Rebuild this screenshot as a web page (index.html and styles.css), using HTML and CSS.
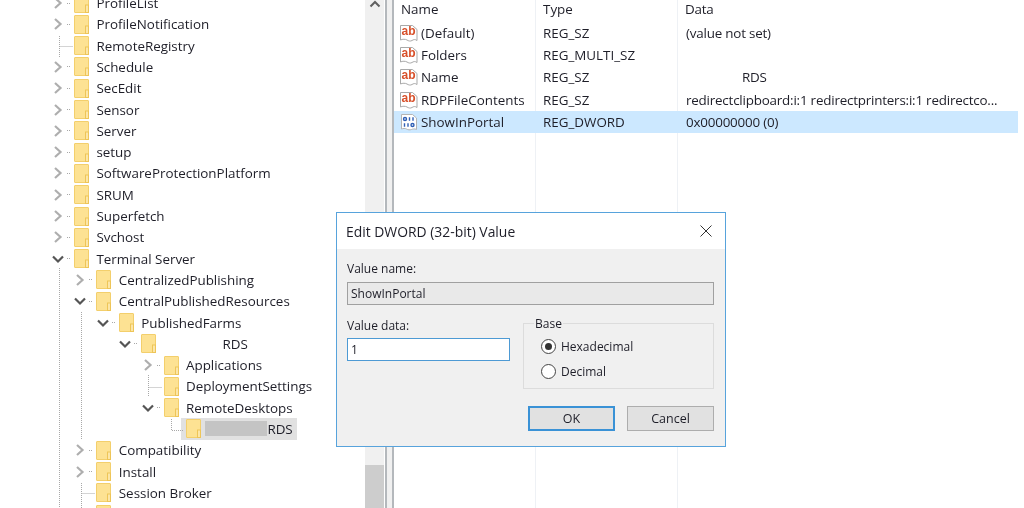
FILE: index.html
```html
<!DOCTYPE html>
<html lang="en">
<head>
<meta charset="utf-8">
<title>Registry Editor</title>
<link rel="stylesheet" href="styles.css">
</head>
<body>
<svg class="defs" width="0" height="0" aria-hidden="true">
  <symbol id="folder" viewBox="0 0 15 19">
    <rect x=".5" y=".5" width="14" height="18" rx=".5" fill="#fde293" stroke="#f3cf6c"/>
    <rect x="11.500" y="11" width="3" height="7.500" fill="#fce6a8" stroke="#eec558" stroke-width="1"/>
  </symbol>
  <symbol id="chev-r" viewBox="0 0 14 14">
    <path d="M4 2l5.500 5L4 12" fill="none" stroke="#aeaeae" stroke-width="2.200"/>
  </symbol>
  <symbol id="chev-d" viewBox="0 0 14 14">
    <path d="M2 4.500l5 5 5-5" fill="none" stroke="#555" stroke-width="2.200"/>
  </symbol>
  <symbol id="page" viewBox="0 0 18 18">
    <path d="M.5 1.500h12l4.500 4v11c-2-1.500-3.500-1-5 0s-3.500 .5-5-.5-4.500-1-6.500 0z" fill="#fff" stroke="#a9a9a9"/>
  </symbol>
  <symbol id="bits" viewBox="0 0 18 18">
    <path d="M1.500 1.500h11l4 3.500v11.500c-2-1-3.500-.5-5 0s-3.500 .5-5-.5-3.500-.5-5 0z" fill="#fff" stroke="#b4b4b4"/>
    <g fill="none" stroke="#2f5fb5" stroke-width="1.400">
      <circle cx="5" cy="6" r="1.500"/><path d="M9.500 4.200v3.600M13 4.200v3.600"/>
      <path d="M4.500 10.200v3.600M8 10.200v3.600"/><circle cx="12.500" cy="12" r="1.500"/>
    </g>
  </symbol>
</svg>

<div class="app">
  <div class="tree-pane">
    <div class="tree">
      <div class="row d0"><svg class="chev"><use href="#chev-r"/></svg><i class="stub"></i><svg class="folder"><use href="#folder"/></svg><span>ProfileList</span></div>
      <div class="row d0"><svg class="chev"><use href="#chev-r"/></svg><i class="stub"></i><svg class="folder"><use href="#folder"/></svg><span>ProfileNotification</span></div>
      <div class="row d0"><i class="chev"></i><i class="stub"></i><svg class="folder"><use href="#folder"/></svg><span>RemoteRegistry</span></div>
      <div class="row d0"><svg class="chev"><use href="#chev-r"/></svg><i class="stub"></i><svg class="folder"><use href="#folder"/></svg><span>Schedule</span></div>
      <div class="row d0"><svg class="chev"><use href="#chev-r"/></svg><i class="stub"></i><svg class="folder"><use href="#folder"/></svg><span>SecEdit</span></div>
      <div class="row d0"><svg class="chev"><use href="#chev-r"/></svg><i class="stub"></i><svg class="folder"><use href="#folder"/></svg><span>Sensor</span></div>
      <div class="row d0"><svg class="chev"><use href="#chev-r"/></svg><i class="stub"></i><svg class="folder"><use href="#folder"/></svg><span>Server</span></div>
      <div class="row d0"><svg class="chev"><use href="#chev-r"/></svg><i class="stub"></i><svg class="folder"><use href="#folder"/></svg><span>setup</span></div>
      <div class="row d0"><svg class="chev"><use href="#chev-r"/></svg><i class="stub"></i><svg class="folder"><use href="#folder"/></svg><span>SoftwareProtectionPlatform</span></div>
      <div class="row d0"><svg class="chev"><use href="#chev-r"/></svg><i class="stub"></i><svg class="folder"><use href="#folder"/></svg><span>SRUM</span></div>
      <div class="row d0"><svg class="chev"><use href="#chev-r"/></svg><i class="stub"></i><svg class="folder"><use href="#folder"/></svg><span>Superfetch</span></div>
      <div class="row d0"><svg class="chev"><use href="#chev-r"/></svg><i class="stub"></i><svg class="folder"><use href="#folder"/></svg><span>Svchost</span></div>
      <div class="row d0"><svg class="chev"><use href="#chev-d"/></svg><i class="stub"></i><svg class="folder"><use href="#folder"/></svg><span>Terminal Server</span></div>
      <div class="row d1"><svg class="chev"><use href="#chev-r"/></svg><i class="stub"></i><svg class="folder"><use href="#folder"/></svg><span>CentralizedPublishing</span></div>
      <div class="row d1"><svg class="chev"><use href="#chev-d"/></svg><i class="stub"></i><svg class="folder"><use href="#folder"/></svg><span>CentralPublishedResources</span></div>
      <div class="row d2"><svg class="chev"><use href="#chev-d"/></svg><i class="stub"></i><svg class="folder"><use href="#folder"/></svg><span>PublishedFarms</span></div>
      <div class="row d3"><svg class="chev"><use href="#chev-d"/></svg><i class="stub"></i><svg class="folder"><use href="#folder"/></svg><span class="gap-rds">RDS</span></div>
      <div class="row d4"><svg class="chev"><use href="#chev-r"/></svg><i class="stub"></i><svg class="folder"><use href="#folder"/></svg><span>Applications</span></div>
      <div class="row d4"><i class="chev"></i><i class="stub"></i><svg class="folder"><use href="#folder"/></svg><span>DeploymentSettings</span></div>
      <div class="row d4"><svg class="chev"><use href="#chev-d"/></svg><i class="stub"></i><svg class="folder"><use href="#folder"/></svg><span>RemoteDesktops</span></div>
      <div class="row d5 selected"><i class="chev"></i><i class="stub"></i><svg class="folder"><use href="#folder"/></svg><div class="sel-box"><b class="redact"></b><span>RDS</span></div></div>
      <div class="row d1"><svg class="chev"><use href="#chev-r"/></svg><i class="stub"></i><svg class="folder"><use href="#folder"/></svg><span>Compatibility</span></div>
      <div class="row d1"><svg class="chev"><use href="#chev-r"/></svg><i class="stub"></i><svg class="folder"><use href="#folder"/></svg><span>Install</span></div>
      <div class="row d1"><i class="chev"></i><i class="stub"></i><svg class="folder"><use href="#folder"/></svg><span>Session Broker</span></div>
      <div class="row d1"><i class="chev"></i><i class="stub"></i><svg class="folder"><use href="#folder"/></svg><span></span></div>
    </div>
    <svg class="tree-lines" width="365" height="508" aria-hidden="true">
      <g fill="none" stroke="#a8a8a8" stroke-dasharray="1 1">
        <path d="M59.500 36v21M59.500 46.500h13"/>
        <path d="M59.500 268v240"/>
        <path d="M81.500 312v128M81.500 483v25M81.500 493.500h13"/>
        <path d="M148.500 375v22M148.500 387.500h13"/>
        <path d="M171.500 419v11.500h12"/>
      </g>
    </svg>
  </div>

  <div class="scrollbar">
    <svg class="scroll-up" width="12" height="8"><path d="M1.500 6.500L6 2l4.500 4.500" fill="none" stroke="#606060" stroke-width="2"/></svg>
    <div class="scroll-thumb"></div>
  </div>
  <div class="splitter"></div>

  <div class="values">
    <div class="cols">
      <div class="col-name">Name</div><div class="col-type">Type</div><div class="col-data">Data</div>
    </div>
    <div class="vrow">
      <div class="col-name"><span class="vicon"><svg><use href="#page"/></svg><em>ab</em></span>(Default)</div><div class="col-type">REG_SZ</div><div class="col-data">(value not set)</div>
    </div>
    <div class="vrow">
      <div class="col-name"><span class="vicon"><svg><use href="#page"/></svg><em>ab</em></span>Folders</div><div class="col-type">REG_MULTI_SZ</div><div class="col-data"></div>
    </div>
    <div class="vrow">
      <div class="col-name"><span class="vicon"><svg><use href="#page"/></svg><em>ab</em></span>Name</div><div class="col-type">REG_SZ</div><div class="col-data"><span class="rds-data">RDS</span></div>
    </div>
    <div class="vrow">
      <div class="col-name"><span class="vicon"><svg><use href="#page"/></svg><em>ab</em></span>RDPFileContents</div><div class="col-type">REG_SZ</div><div class="col-data">redirectclipboard:i:1 redirectprinters:i:1 redirectco...</div>
    </div>
    <div class="vrow active">
      <div class="col-name"><span class="vicon"><svg><use href="#bits"/></svg></span>ShowInPortal</div><div class="col-type">REG_DWORD</div><div class="col-data">0x00000000 (0)</div>
    </div>
  </div>
</div>

<div class="dialog">
  <div class="title">
    <span>Edit DWORD (32-bit) Value</span>
    <svg class="close" width="12" height="12"><path d="M.5 .5l11 11M11.500 .5l-11 11" stroke="#333" stroke-width="1" fill="none"/></svg>
  </div>
  <div class="dbody">
    <div class="lbl-name">Value name:</div>
    <div class="name-field">ShowInPortal</div>
    <div class="mid">
      <div class="data-col">
        <div class="lbl-data">Value data:</div>
        <div class="data-field">1</div>
      </div>
      <div class="base">
        <div class="legend">Base</div>
        <div class="radio-row"><span class="radio on"></span>Hexadecimal</div>
        <div class="radio-row"><span class="radio"></span>Decimal</div>
      </div>
    </div>
    <div class="buttons">
      <div class="btn primary">OK</div>
      <div class="btn">Cancel</div>
    </div>
  </div>
</div>
</body>
</html>
```
FILE: styles.css
```css
* { box-sizing: border-box; }
html, body { margin: 0; height: 100%; background: #fff; overflow: hidden; }
body {
  font-family: "Open Sans", "Liberation Sans", sans-serif;
  font-size: 13.400px;
  color: #1e1e28;
  filter: blur(.45px);
}
.defs { position: absolute; }
.app { display: flex; height: 508px; overflow: hidden; }

.tree-pane { position: relative; width: 365px; flex: none; height: 508px; overflow: hidden; }
.tree { margin-top: -7.600px; }
.tree-lines { position: absolute; left: 0; top: 0; pointer-events: none; }
.row { display: flex; align-items: center; height: 21.300px; white-space: nowrap; }
.d0 { padding-left: 51px; }
.d1 { padding-left: 73.400px; }
.d2 { padding-left: 95.800px; }
.d3 { padding-left: 118.200px; }
.d4 { padding-left: 140.600px; }
.d5 { padding-left: 163px; }
.chev { display: block; width: 14px; height: 14px; flex: none; }
.stub { display: block; width: 4px; height: 1px; margin: 0 3px 0 2px; flex: none;
  background: repeating-linear-gradient(90deg, #a8a8a8 0 1px, transparent 1px 2px); }
.row > .chev:not(svg) + .stub { background: none; }
.folder { width: 15px; height: 19px; flex: none; margin-right: 7.400px; }
.gap-rds { margin-left: 59px; }
.selected { position: relative; }
.sel-box { display: flex; align-items: center; height: 21.300px; margin-left: -3px; }
.selected::before { content: ""; position: absolute; left: 181px; width: 116px; top: 0; height: 21.300px; background: #e1e1e1; z-index: -1; }
.redact { display: block; width: 62px; height: 15px; background: #c4c4c4; flex: none; }

.scrollbar { position: relative; width: 19px; flex: none; background: #f0f0f0; }
.scroll-up { display: block; margin: 0 auto; }
.scroll-thumb { position: absolute; left: 0; right: 0; bottom: 0; height: 43px; background: #cdcdcd; }
.splitter { width: 9px; margin-left: 1px; flex: none; background: #f0f0f0; border-left: 2px solid #b4b8bc; border-right: 2px solid #b4b8bc; }

.values { flex: 1; min-width: 0; padding-right: 6px;
  background-image: linear-gradient(#eef1f5, #eef1f5), linear-gradient(#eef1f5, #eef1f5);
  background-repeat: no-repeat; background-size: 1px 100%; background-position: 141px 0, 283px 0; }
.cols { display: grid; grid-template-columns: 142px 142px 1fr; height: 14px; margin-bottom: 8px; align-items: center; }
.vrow { display: grid; grid-template-columns: 142px 142px 1fr; height: 22.200px; align-items: center; white-space: nowrap; }
.cols > div { padding-left: 7px; }
.col-name { display: flex; align-items: center; padding-left: 6px; }
.col-type { padding-left: 7px; }
.col-data { padding-left: 8px; letter-spacing: -.2px; }
.vrow .col-data { overflow: hidden; }
.active { background: #cce8ff; }
.vicon { position: relative; display: block; width: 18px; height: 18px; margin-right: 3px; flex: none; }
.vicon svg { display: block; width: 18px; height: 18px; }
.vicon em { position: absolute; left: 1px; top: 2px; width: 15px; height: 11px;
  font: bold 12px/10px "Liberation Sans", sans-serif; color: #d8502a; text-align: center; }
.rds-data { margin-left: 56px; }

.dialog { position: absolute; left: 336px; top: 212px; width: 390px; height: 235px; background: #f0f0f0;
  border: 1px solid #57a3dc; }
.title { display: flex; align-items: center; justify-content: space-between; height: 36px; background: #fff;
  padding: 0 13px 0 9px; font-size: 13.900px; }
.dbody { padding: 12px 11px 0 10px; font-size: 12px; }
.lbl-name { height: 16px; line-height: 16px; }
.name-field { margin-top: 5px; height: 23px; line-height: 21px; padding-left: 3px; background: #e9e9e9; border: 1px solid #a0a0a0; }
.mid { display: flex; justify-content: space-between; margin-top: 12px; }
.data-col { width: 163px; }
.lbl-data { height: 16px; line-height: 16px; margin-top: 1px; }
.data-field { margin-top: 4px; height: 23px; line-height: 21px; padding-left: 3px; background: #fff; border: 1px solid #4d9ad4; }
.base { position: relative; width: 191px; height: 66px; margin-top: 6px; border: 1px solid #dcdcdc; padding-top: 10px; }
.legend { position: absolute; left: 10px; top: -8px; height: 16px; line-height: 16px; padding: 0 1px; background: #f0f0f0; }
.radio-row { display: flex; align-items: center; height: 25px; padding-left: 17px; }
.radio { display: block; position: relative; width: 15px; height: 15px; border-radius: 50%; background: #fff; border: 1px solid #444; margin-right: 5px; }
.radio.on::after { content: ""; position: absolute; left: 3px; top: 3px; width: 7px; height: 7px; border-radius: 50%; background: #333; }
.buttons { display: flex; justify-content: flex-end; gap: 12px; margin-top: 17px; }
.btn { width: 87px; height: 25px; line-height: 23px; text-align: center; background: #e1e1e1; border: 1px solid #adadad; font-size: 12.500px; }
.btn.primary { border: 2px solid #3a92d6; line-height: 21px; }
```
